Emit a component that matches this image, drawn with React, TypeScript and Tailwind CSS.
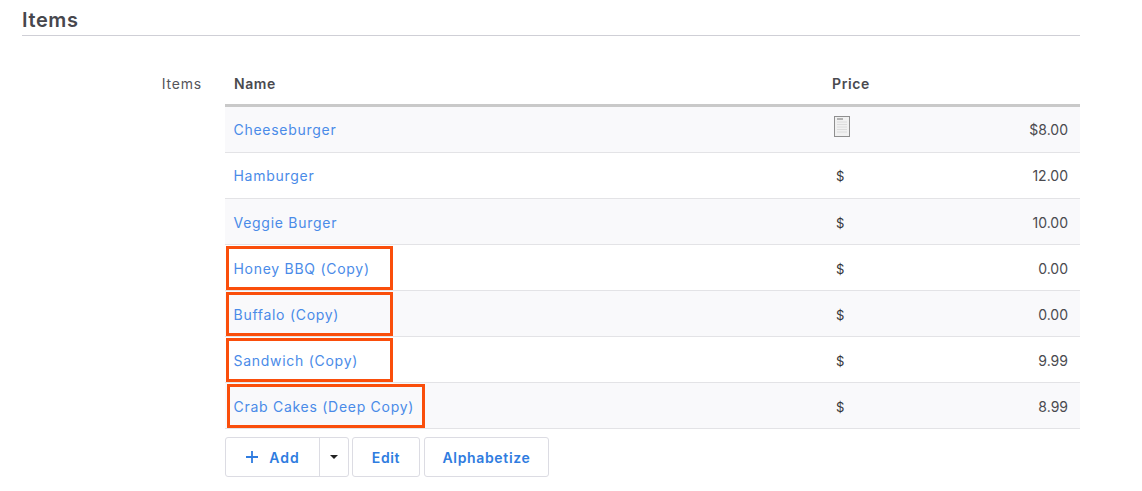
const rows: { name: string; cur: string; price: string; box?: string }[] = [
  { name: "Cheeseburger", cur: "doc", price: "$8.00" },
  { name: "Hamburger", cur: "$", price: "12.00" },
  { name: "Veggie Burger", cur: "$", price: "10.00" },
  { name: "Honey BBQ (Copy)", cur: "$", price: "0.00", box: "left-[1px] top-[1px] w-[167px] h-[44px]" },
  { name: "Buffalo (Copy)", cur: "$", price: "0.00", box: "left-[1px] top-[1px] w-[167px] h-[44px]" },
  { name: "Sandwich (Copy)", cur: "$", price: "9.99", box: "left-[1px] top-[1px] w-[167px] h-[44px]" },
  { name: "Crab Cakes (Deep Copy)", cur: "$", price: "8.99", box: "left-[2px] top-[1px] w-[198px] h-[44px]" },
];

function DocIcon() {
  return (
    <svg width="16" height="21" viewBox="0 0 16 21" className="block">
      <rect x="0.5" y="0.5" width="15" height="20" fill="#f1f1f1" stroke="#8f8f8f" />
      <path d="M3 3h6" stroke="#777" strokeWidth="1" />
      <path d="M3 6h10M3 8.500h10M3 11h10M3 13.500h10M3 16h10" stroke="#dcdcdc" strokeWidth="1" />
    </svg>
  );
}

export default function App() {
  return (
    <div className="w-[1142px] h-[491px] overflow-hidden bg-white font-['Inter',sans-serif] text-[14px] text-[#4a4a4f]">
      <div className="ml-[22px] w-[1058px]">
        <h2 className="h-[36px] pt-[7px] border-b border-[#cfcfd6] text-[20px] leading-[26px] font-semibold tracking-[0.600px] text-[#47474d]">Items</h2>
        <div className="flex mt-[28px]">
          <div className="w-[180px] pt-[10px] text-right text-[14px] leading-[20px] tracking-[0.800px] text-[#55555a]">Items</div>
          <div className="ml-[23px] w-[855px]">
            <div className="flex h-[43px] border-b-[3px] border-[#c9c9c9] text-[14px] font-semibold tracking-[0.600px] text-[#4a4a4f]">
              <div className="w-[607px] pl-[9px] pt-[10px] leading-[20px]">Name</div>
              <div className="pt-[10px] leading-[20px]">Price</div>
            </div>
            {rows.map((r, i) => (
              <div
                key={r.name}
                className={`flex items-center h-[46px] border-b border-[#e3e3e6] ${i % 2 === 0 ? "bg-[#f9f9fb]" : "bg-white"}`}
              >
                <div className="relative w-[607px] h-full flex items-center pl-[8.500px]">
                  <span className={`text-[14px] tracking-[0.720px] text-[#4a8be8] ${i >= 2 ? "pt-[2px]" : ""}`}>{r.name}</span>
                  {r.box && <div className={`absolute border-[3px] border-[#fa4e0b] ${r.box}`} />}
                </div>
                <div className={`w-[40px] text-[14px] ${i >= 2 ? "pt-[2px]" : ""}`}>
                  {r.cur === "doc" ? <div className="ml-[2px] -mt-[6px]"><DocIcon /></div> : <span className="ml-[4px] text-[13px] text-[#333338]">$</span>}
                </div>
                <div className={`flex-1 pr-[12px] text-right text-[14px] ${i >= 2 ? "pt-[2px]" : ""}`}>{r.price}</div>
              </div>
            ))}
            <div className="flex gap-[4px] mt-[8px] text-[14px] font-semibold tracking-[0.650px] text-[#2f7ce0]">
              <div className="flex h-[40px] w-[124px] -mr-[1px] rounded-[3px] border border-[#dcdce3] bg-white">
                <div className="flex items-center justify-center gap-[10px] w-[94px] border-r border-[#dcdce3]">
                  <svg width="14" height="14" viewBox="0 0 14 14"><path d="M7 1v12M1 7h12" stroke="#2f7ce0" strokeWidth="1.800" /></svg>
                  <span className="tracking-[1px]">Add</span>
                </div>
                <div className="flex flex-1 items-center justify-center">
                  <div className="w-0 h-0 mb-[1px] border-x-[4px] border-x-transparent border-t-[4px] border-t-[#222]" />
                </div>
              </div>
              <div className="flex h-[40px] w-[68px] items-center justify-center rounded-[3px] border border-[#dcdce3] bg-white">Edit</div>
              <div className="flex h-[40px] w-[125px] items-center justify-center rounded-[3px] border border-[#dcdce3] bg-white">Alphabetize</div>
            </div>
          </div>
        </div>
      </div>
    </div>
  );
}
